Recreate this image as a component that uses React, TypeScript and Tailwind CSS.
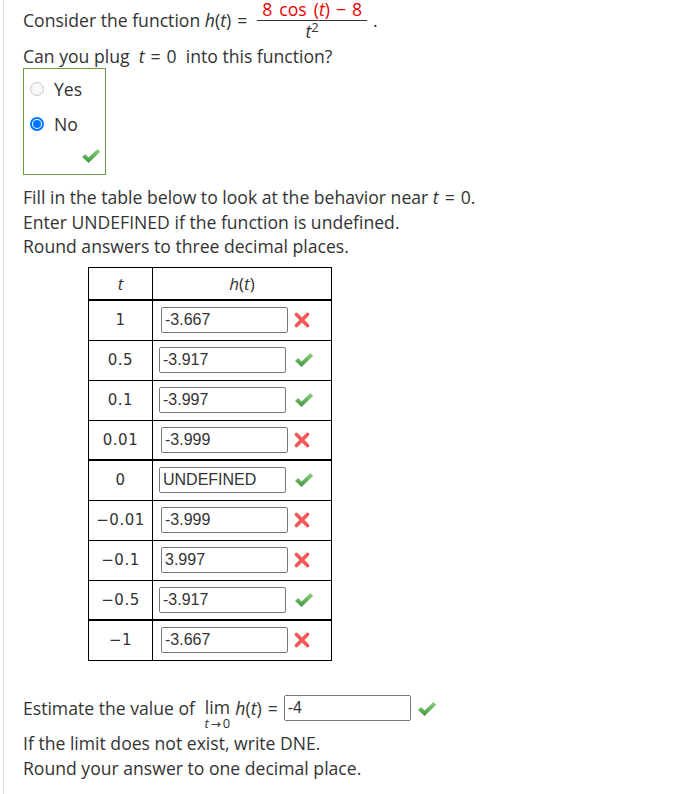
import React from "react";

const Check = () => (
  <svg width="20" height="16" viewBox="0 0 20 16" className="shrink-0">
    <defs>
      <linearGradient id="cg" x1="0" y1="0" x2="0" y2="1">
        <stop offset="0" stopColor="#8fd17f" />
        <stop offset="1" stopColor="#3e963e" />
      </linearGradient>
    </defs>
    <path d="M1 9 L4.2 6 L7.6 9.4 L16.4 1 L19.2 3.8 L7.6 15 Z" fill="url(#cg)" />
  </svg>
);

const Cross = () => (
  <svg width="18" height="18" viewBox="0 0 18 18" className="shrink-0">
    <path d="M3.5 3.5 L14.5 14.5 M14.5 3.5 L3.5 14.5" stroke="#f25a5a" strokeWidth="3.8" strokeLinecap="round" />
  </svg>
);

const M = ({ children }: { children: React.ReactNode }) => <span className="italic">{children}</span>;
const Eq = () => <span className="mx-[6px]">=</span>;

type Row = { t: string; v: string; ok: boolean; thick?: boolean };
const rows: Row[] = [
  { t: "1", v: "-3.667", ok: false },
  { t: "0.5", v: "-3.917", ok: true },
  { t: "0.1", v: "-3.997", ok: true },
  { t: "0.01", v: "-3.999", ok: false },
  { t: "0", v: "UNDEFINED", ok: true, thick: true },
  { t: "\u22120.01", v: "-3.999", ok: false },
  { t: "\u22120.1", v: "3.997", ok: false },
  { t: "\u22120.5", v: "-3.917", ok: true },
  { t: "\u22121", v: "-3.667", ok: false, thick: true },
];

const inputCls =
  "w-[127px] h-[26px] border border-[#777] rounded-[2px] px-[3px] flex items-center text-[16px] text-[#333]";

export default function App() {
  return (
    <div className="w-[689px] h-[794px] bg-white overflow-hidden">
      <div
        className="ml-[3px] h-full border-l border-[#dcdcdc] pl-[19px] text-[17.6px] text-[#333]"
        style={{ fontFamily: "'Open Sans', sans-serif" }}
      >
        <div className="flex items-center h-[41px]">
          <span>Consider the function&nbsp;</span>
          <span>
            <M>h</M>(<M>t</M>)
          </span>
          <Eq />
          <span className="inline-flex flex-col items-center ml-[4px] mr-[6px]">
            <span className="text-[#e00] leading-[19px] px-[5px] pb-[1px] border-b border-[#333] whitespace-nowrap">
              8<span className="ml-[7px]">cos</span>
              <span className="ml-[7px]">(</span>
              <M>t</M>)<span className="mx-[6px]">−</span>8
            </span>
            <span className="leading-[19px] pt-[1px]">
              <M>t</M>
              <sup className="text-[13px]">2</sup>
            </span>
          </span>
          <span>.</span>
        </div>
        <div className="mt-[3px] leading-[24px]">
          Can you plug&nbsp;&nbsp;<M>t</M>
          <Eq />0&nbsp;&nbsp;into this function?
        </div>
        <div className="mt-[0px] w-[83px] h-[107px] border border-[#6a9a3c] relative">
          <label className="flex items-center gap-[10px] pl-[6px] pt-[8px] leading-[24px]">
            <span className="w-[14px] h-[14px] rounded-full border border-[#c8c8c8] bg-[#f8f8f8]" />
            <span>Yes</span>
          </label>
          <label className="flex items-center gap-[10px] pl-[6px] pt-[11px] leading-[24px]">
            <span className="w-[14px] h-[14px] rounded-full border-[2px] border-[#0075ff] flex items-center justify-center">
              <span className="w-[8px] h-[8px] rounded-full bg-[#0075ff]" />
            </span>
            <span>No</span>
          </label>
          <div className="absolute right-[4px] bottom-[10px]">
            <Check />
          </div>
        </div>
        <div className="mt-[10px] leading-[24.5px]">
          <div>
            Fill in the table below to look at the behavior near <M>t</M>
            <Eq />0.
          </div>
          <div>Enter UNDEFINED if the function is undefined.</div>
          <div>Round answers to three decimal places.</div>
        </div>
        <table className="mt-[8px] ml-[65px] border-collapse border border-black">
          <thead>
            <tr className="h-[33px]">
              <th className="w-[64px] border border-black border-b-2 font-normal italic text-[17px]">t</th>
              <th className="w-[179px] border border-black border-b-2 font-normal text-[17px]">
                <M>h</M>(<M>t</M>)
              </th>
            </tr>
          </thead>
          <tbody>
            {rows.map((r, i) => (
              <tr key={i} className="h-[40px]">
                <td
                  className={
                    "border border-black text-center tracking-[0.5px] " +
                    (r.thick ? "border-t-2" : "")
                  }
                  style={{ fontFamily: "'DejaVu Sans', sans-serif", fontSize: "15px" }}
                >
                  {r.t}
                </td>
                <td className={"border border-black " + (r.thick ? "border-t-2" : "")}>
                  <div className={"flex items-center " + (r.ok ? "pl-[6px] gap-[8px]" : "pl-[8px] gap-[5px]")}>
                    <div className={inputCls} style={{ fontFamily: "'Liberation Sans', Arial, sans-serif" }}>
                      {r.v}
                    </div>
                    {r.ok ? <Check /> : <Cross />}
                  </div>
                </td>
              </tr>
            ))}
          </tbody>
        </table>
        <div className="mt-[34px] flex items-start h-[36px]">
          <span className="mt-[1px] leading-[24px]">Estimate the value of&nbsp;</span>
          <span className="inline-flex flex-col items-center mt-[3px] mx-[5px]">
            <span className="leading-[19px]">lim</span>
            <span className="text-[13px] leading-[13px] whitespace-nowrap">
              <M>t</M>
              <span style={{ fontFamily: "'DejaVu Sans', sans-serif" }} className="text-[12px] mx-[2px]">→</span>0
            </span>
          </span>
          <span className="mt-[1px] leading-[24px] flex">
            <span>
              <M>h</M>(<M>t</M>)
            </span>
            <Eq />
          </span>
          <div className={inputCls} style={{ fontFamily: "'Liberation Sans', Arial, sans-serif" }}>
            -4
          </div>
          <span className="ml-[6px] mt-[6px]">
            <Check />
          </span>
        </div>
        <div className="leading-[25px] mt-[0px]">
          <div>If the limit does not exist, write DNE.</div>
          <div>Round your answer to one decimal place.</div>
        </div>
      </div>
    </div>
  );
}
